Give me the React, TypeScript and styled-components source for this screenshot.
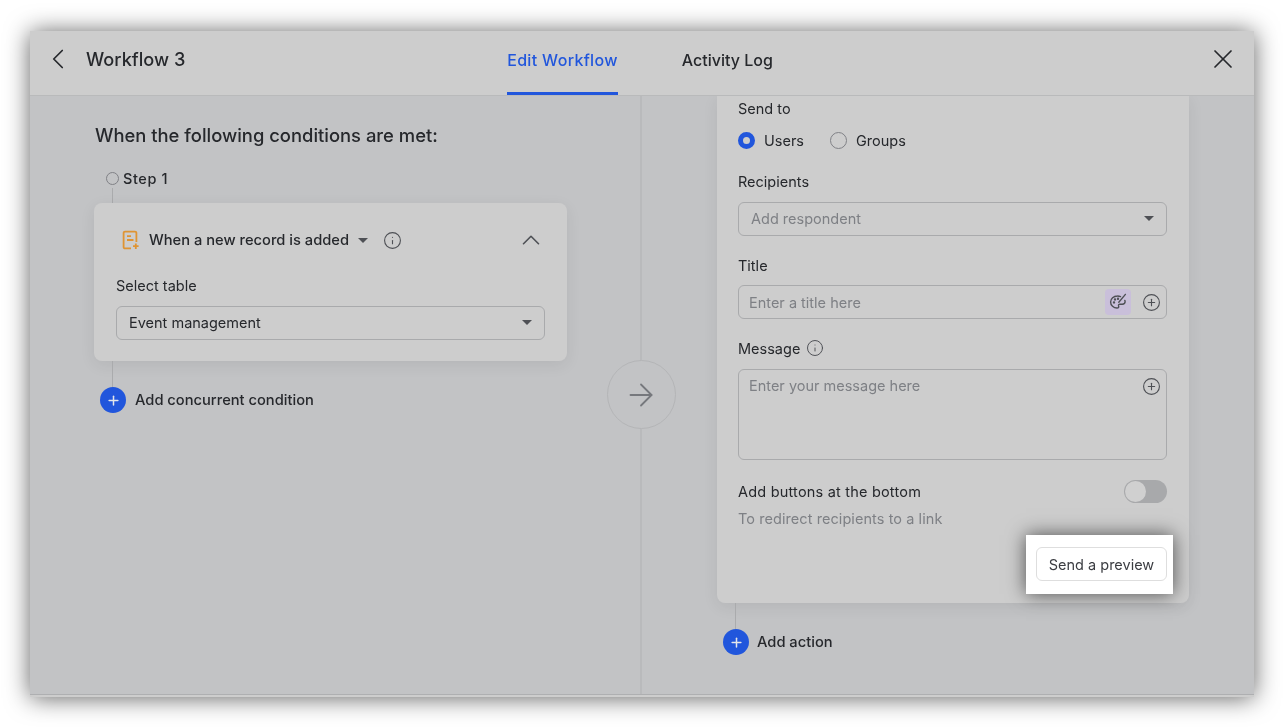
import * as React from "react"
import styled, { createGlobalStyle } from "styled-components"
import { ArrowRight, ChevronLeft, ChevronUp, CirclePlus, Info, Plus, X } from "lucide-react"

const text = "#26282c"
const muted = "#7e8085"
const line = "#a9aaac"
const surface = "#cdcdcd"
const backdrop = "#c2c3c5"
const blue = "#2156dc"

const GlobalStyle = createGlobalStyle`
    html, body {
        margin: 0;
        padding: 0;
        background: #fff;
    }

    * {
        box-sizing: border-box;
    }
`

const Page = styled.div`
    width: 1284px;
    height: 728px;
    padding: 31px 30px;
    display: flex;
    font-family: Inter, "Liberation Sans", sans-serif;
    font-size: 14.5px;
    color: ${text};
    overflow: hidden;
    filter: blur(0.35px);
`

const Window = styled.div`
    flex: 1;
    display: flex;
    flex-direction: column;
    padding-bottom: 2px;
    background: ${surface};
    box-shadow: 0 1px 24px rgba(0, 0, 0, 0.62);
    border-radius: 2px 2px 0 0;
    min-width: 0;
`

const Header = styled.header`
    position: relative;
    height: 65px;
    flex: none;
    display: flex;
    align-items: center;
    justify-content: center;
    border-bottom: 1px solid #b9babb;
    background: ${surface};
`

const HeaderLeft = styled.div`
    position: absolute;
    left: 11px;
    top: 0;
    height: 100%;
    padding-bottom: 8px;
    display: flex;
    align-items: center;
    gap: 11px;
`

const BackButton = styled.span`
    display: flex;
    color: ${text};
`

const WindowTitle = styled.h1`
    margin: 0;
    font-size: 18.2px;
    font-weight: 450;
`

const Tabs = styled.nav`
    display: flex;
    height: 100%;
    gap: 64px;
    margin-left: -4px;
`

const Tab = styled.a<{ $active?: boolean }>`
    display: flex;
    align-items: center;
    height: 100%;
    padding-bottom: 4px;
    font-size: 16px;
    font-weight: 450;
    letter-spacing: ${({ $active }) => ($active ? "0.33px" : "0")};
    color: ${({ $active }) => ($active ? blue : text)};
    border-bottom: 3px solid ${({ $active }) => ($active ? blue : "transparent")};
`

const CloseButton = styled.span`
    position: absolute;
    right: 15px;
    top: 12px;
    display: flex;
    color: ${text};
`

const Body = styled.main`
    position: relative;
    flex: 1;
    min-height: 0;
    display: grid;
    grid-template-columns: 612px 1fr;
    background: ${backdrop};
    border-bottom: 1px solid #aeafb1;
    overflow: hidden;
`

const LeftPane = styled.section`
    padding: 27px 0 0 64px;
    border-right: 2px solid #b9babc;
    display: flex;
    flex-direction: column;
    align-items: flex-start;
`

const RightPane = styled.section`
    padding-left: 75px;
    display: flex;
    flex-direction: column;
    align-items: flex-start;
`

const Heading = styled.h2`
    margin: 0 0 0 1px;
    font-size: 18.4px;
    line-height: 24px;
    font-weight: 450;
`

const StepRow = styled.div`
    display: flex;
    align-items: center;
    gap: 4px;
    height: 20px;
    margin: 21px 0 0 12px;
    font-weight: 450;
    letter-spacing: 0.6px;
`

const StepDot = styled.span`
    width: 13px;
    height: 13px;
    border-radius: 50%;
    border: 1px solid #808186;
`

const Connector = styled.div<{ $height: number }>`
    width: 1px;
    height: ${({ $height }) => $height}px;
    margin-left: 18px;
    background: #aaabad;
`

const Card = styled.div`
    background: ${surface};
    border-radius: 8px;
    box-shadow: 0 4px 16px rgba(0, 0, 0, 0.07);
`

const TriggerCard = styled(Card)`
    width: 473px;
    height: 158px;
    padding: 0 22px;
    display: flex;
    flex-direction: column;
`

const TriggerRow = styled.div`
    display: flex;
    align-items: center;
    height: 20px;
    margin-top: 27px;
    padding-left: 6px;
    font-size: 14.7px;
    font-weight: 450;
`

const TriggerName = styled.span`
    margin-left: 9px;
`

const TriggerInfo = styled.span`
    display: flex;
    margin-left: 15px;
    color: #4e5055;
`

const Collapse = styled.span`
    display: flex;
    margin-left: auto;
    margin-right: -1px;
    color: #4e5055;
`

const Label = styled.div<{ $gap: number }>`
    display: flex;
    align-items: center;
    gap: 6px;
    height: 20px;
    padding-top: 2px;
    margin-top: ${({ $gap }) => $gap}px;
    color: ${text};
`

const Caret = styled.span<{ $gap?: number }>`
    flex: none;
    width: 0;
    height: 0;
    margin-left: ${({ $gap }) => $gap ?? 0}px;
    border-left: 5px solid transparent;
    border-right: 5px solid transparent;
    border-top: 5px solid #4e5055;
`

const Field = styled.div<{ $gap: number; $height: number; $placeholder?: boolean }>`
    display: flex;
    align-items: center;
    justify-content: space-between;
    height: ${({ $height }) => $height}px;
    margin-top: ${({ $gap }) => $gap}px;
    padding: 0 12px 1px 12px;
    border: 1px solid ${line};
    border-radius: 6px;
    color: ${({ $placeholder }) => ($placeholder ? muted : text)};
`

const TitleField = styled(Field)`
    padding: 0 5px 0 10px;
`

const FieldTools = styled.div`
    display: flex;
    align-items: center;
    gap: 11px;
`

const PaletteButton = styled.span`
    display: flex;
    align-items: center;
    justify-content: center;
    width: 26px;
    height: 26px;
    border-radius: 4px;
    background: #c9bfda;
    color: #4e5055;
`

const ToolIcon = styled.span`
    display: flex;
    color: #4e5055;
`

const MessageField = styled(Field)`
    align-items: flex-start;
    padding: 7px 5px 0 10px;
`

const AddRow = styled.div<{ $gap: number }>`
    display: flex;
    align-items: center;
    gap: ${({ $gap }) => $gap}px;
    margin-left: 6px;
    font-size: 14.7px;
    font-weight: 450;
`

const AddCircle = styled.span`
    width: 26px;
    height: 26px;
    border-radius: 50%;
    display: flex;
    align-items: center;
    justify-content: center;
    background: ${blue};
    color: #e4e6ea;
`

const ActionCard = styled(Card)`
    width: 472px;
    padding: 1px 22px 9px 21px;
    border-radius: 0 0 8px 8px;
    display: flex;
    flex-direction: column;
`

const RadioGroup = styled.div`
    display: flex;
    align-items: center;
    height: 20px;
    margin-top: 13px;
    gap: 26px;
`

const RadioOption = styled.label`
    display: flex;
    align-items: center;
    gap: 9px;
`

const Radio = styled.span<{ $checked?: boolean }>`
    width: 17px;
    height: 17px;
    border-radius: 50%;
    background: ${({ $checked }) => ($checked ? surface : "transparent")};
    border: ${({ $checked }) => ($checked ? `5px solid ${blue}` : "1px solid #808186")};
`

const ToggleRow = styled.div`
    display: flex;
    align-items: center;
    justify-content: space-between;
    margin-top: 20px;
    height: 23px;
    letter-spacing: 0.2px;
`

const Toggle = styled.span`
    width: 43px;
    height: 23px;
    padding: 1px;
    border-radius: 12px;
    background: #a8a9ab;
`

const ToggleKnob = styled.span`
    display: block;
    width: 21px;
    height: 21px;
    border-radius: 50%;
    background: #d0d0d0;
`

const Hint = styled.div`
    height: 20px;
    margin-top: 7px;
    letter-spacing: 0.07px;
    color: ${muted};
`

const PreviewHighlight = styled.div`
    align-self: flex-end;
    margin: 5px -6px 0 0;
    padding: 12px 6px 13px 10px;
    background: #fff;
    box-shadow: 0 0 18px rgba(0, 0, 0, 0.62);
`

const PreviewButton = styled.button`
    display: block;
    width: 131px;
    height: 34px;
    padding: 0;
    border: 1px solid #dedede;
    border-radius: 6px;
    background: #fff;
    font: inherit;
    color: #3b3d42;
`

const FlowBadge = styled.div`
    position: absolute;
    left: 577px;
    top: 264px;
    width: 69px;
    height: 69px;
    padding-right: 1px;
    border-radius: 50%;
    display: flex;
    align-items: center;
    justify-content: center;
    background: ${backdrop};
    border: 1px solid #b4b5b7;
    color: #76787d;
`

const RecordIcon = () => (
    <svg width="18" height="20" viewBox="0 0 18 20" fill="none" stroke="#df9433" strokeWidth="1.8">
        <path d="M9 18.4H3a1.4 1.4 0 0 1-1.4-1.4V3A1.4 1.4 0 0 1 3 1.6h10A1.4 1.4 0 0 1 14.4 3v9" />
        <path d="M5 6.2h4M5 10h6.5M11 16.2h5.6M13.8 13.4V19" />
    </svg>
)

const PaletteIcon = () => (
    <svg width="18" height="18" viewBox="0 0 18 18" fill="none" stroke="currentColor" strokeWidth="1.4" strokeLinecap="round">
        <path d="M11.5 3.6A7 7 0 0 0 8.4 3C4.6 3 1.6 5.5 1.6 9s3 6 6.4 6c1.8 0 1.9-1.1 1.6-2-.3-1 .2-1.8 1.3-1.8h2.4c1.6 0 2.8-.9 2.8-2.4 0-.5-.1-1-.3-1.4" />
        <path d="M16.4 1.4 9.8 9.2" />
        <circle cx="5" cy="9.4" r=".5" fill="currentColor" />
        <circle cx="6" cy="6.4" r=".5" fill="currentColor" />
        <circle cx="9" cy="5.8" r=".5" fill="currentColor" />
    </svg>
)

const Condition = () => (
    <>
        <Heading>When the following conditions are met:</Heading>
        <StepRow>
            <StepDot />
            Step 1
        </StepRow>
        <Connector $height={15} />
        <TriggerCard>
            <TriggerRow>
                <RecordIcon />
                <TriggerName>When a new record is added</TriggerName>
                <Caret $gap={9} />
                <TriggerInfo>
                    <Info size={19} strokeWidth={1.4} />
                </TriggerInfo>
                <Collapse>
                    <ChevronUp size={30} strokeWidth={1.3} />
                </Collapse>
            </TriggerRow>
            <Label $gap={24}>Select table</Label>
            <Field $gap={12} $height={34}>
                Event management
                <Caret />
            </Field>
        </TriggerCard>
        <Connector $height={26} />
        <AddRow $gap={9}>
            <AddCircle>
                <Plus size={15} strokeWidth={2.4} />
            </AddCircle>
            Add concurrent condition
        </AddRow>
    </>
)

const Action = () => (
    <>
        <ActionCard>
            <Label $gap={0}>Send to</Label>
            <RadioGroup>
                <RadioOption>
                    <Radio $checked />
                    Users
                </RadioOption>
                <RadioOption>
                    <Radio />
                    Groups
                </RadioOption>
            </RadioGroup>
            <Label $gap={20}>Recipients</Label>
            <Field $gap={12} $height={34} $placeholder>
                Add respondent
                <Caret />
            </Field>
            <Label $gap={18}>Title</Label>
            <TitleField $gap={11} $height={34} $placeholder>
                Enter a title here
                <FieldTools>
                    <PaletteButton>
                        <PaletteIcon />
                    </PaletteButton>
                    <ToolIcon>
                        <CirclePlus size={19} strokeWidth={1.4} />
                    </ToolIcon>
                </FieldTools>
            </TitleField>
            <Label $gap={18}>
                Message
                <ToolIcon>
                    <Info size={18} strokeWidth={1.3} />
                </ToolIcon>
            </Label>
            <MessageField $gap={12} $height={91} $placeholder>
                Enter your message here
                <ToolIcon>
                    <CirclePlus size={19} strokeWidth={1.4} />
                </ToolIcon>
            </MessageField>
            <ToggleRow>
                Add buttons at the bottom
                <Toggle>
                    <ToggleKnob />
                </Toggle>
            </ToggleRow>
            <Hint>To redirect recipients to a link</Hint>
            <PreviewHighlight>
                <PreviewButton>Send a preview</PreviewButton>
            </PreviewHighlight>
        </ActionCard>
        <Connector $height={26} />
        <AddRow $gap={8}>
            <AddCircle>
                <Plus size={15} strokeWidth={2.4} />
            </AddCircle>
            Add action
        </AddRow>
    </>
)

export default function App() {
    return (
        <Page>
            <GlobalStyle />
            <Window>
                <Header>
                    <HeaderLeft>
                        <BackButton>
                            <ChevronLeft size={34} strokeWidth={1.2} />
                        </BackButton>
                        <WindowTitle>Workflow 3</WindowTitle>
                    </HeaderLeft>
                    <Tabs>
                        <Tab $active>Edit Workflow</Tab>
                        <Tab>Activity Log</Tab>
                    </Tabs>
                    <CloseButton>
                        <X size={32} strokeWidth={1.3} />
                    </CloseButton>
                </Header>
                <Body>
                    <LeftPane>
                        <Condition />
                    </LeftPane>
                    <FlowBadge>
                        <ArrowRight size={36} strokeWidth={1.2} />
                    </FlowBadge>
                    <RightPane>
                        <Action />
                    </RightPane>
                </Body>
            </Window>
        </Page>
    )
}
